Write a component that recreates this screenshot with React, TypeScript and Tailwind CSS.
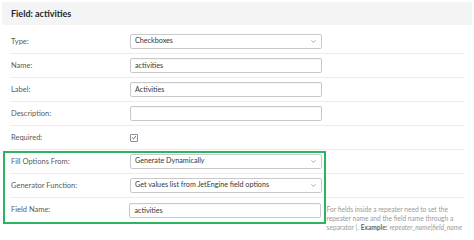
import { ChevronDown } from "lucide-react";

const font = { fontFamily: 'Lato, "Open Sans", sans-serif' };

const Row = ({
  label,
  children,
}: {
  label: string;
  children?: React.ReactNode;
}) => (
  <div className="flex h-[24px] items-center border-b border-[#ececec] ml-[10px] mr-[10px]">
    <div className="w-[120px] pl-[1px] text-[7.5px] text-[#5a5a5a]">{label}</div>
    <div className="w-[192px] flex items-center">{children}</div>
  </div>
);

const Input = ({ value }: { value: string }) => (
  <div className="h-[15px] w-full rounded-[2px] border border-[#c9c9c9] bg-white px-[4px] text-[7.2px] leading-[13px] text-[#32373c] shadow-[inset_0_1px_1px_rgba(0,0,0,0.04)]">
    {value}
  </div>
);

const Select = ({ value }: { value: string }) => (
  <div className="flex h-[15px] w-full items-center justify-between rounded-[2px] border border-[#c9c9c9] bg-white pl-[4px] pr-[4px] text-[7.2px] text-[#32373c]">
    <span>{value}</span>
    <ChevronDown size={7} strokeWidth={2} className="text-[#666]" />
  </div>
);

export default function App() {
  return (
    <div className="relative h-[239px] w-[474px] bg-white pt-[2px]" style={font}>
      <div className="ml-[2px] mr-[2px] flex h-[23px] items-center bg-[#f4f4f4] pl-[9px] text-[9px] font-bold text-[#23282d]">
        Field: activities
      </div>
      <div className="pt-[5px]">
        <Row label="Type:">
          <Select value="Checkboxes" />
        </Row>
        <Row label="Name:">
          <Input value="activities" />
        </Row>
        <Row label="Label:">
          <Input value="Activities" />
        </Row>
        <Row label="Description:">
          <Input value="" />
        </Row>
        <Row label="Required:">
          <div className="flex h-[8px] w-[8px] items-center justify-center rounded-[1px] border border-[#8c8f94] bg-white">
            <svg viewBox="0 0 10 10" className="h-[7px] w-[7px]">
              <path d="M2 5.2 L4.2 7.3 L8.2 2.6" fill="none" stroke="#2271b1" strokeWidth="1.6" />
            </svg>
          </div>
        </Row>
        <Row label="Fill Options From:">
          <Select value="Generate Dynamically" />
        </Row>
        <Row label="Generator Function:">
          <Select value="Get values list from JetEngine field options" />
        </Row>
        <div className="ml-[10px] mr-[10px] flex h-[24px] items-center">
          <div className="w-[120px] pl-[1px] text-[7.5px] text-[#5a5a5a]">Field Name:</div>
          <div className="w-[192px]">
            <Input value="activities" />
          </div>
          <div className="ml-[6px] mt-[17px] w-[138px] text-[6.6px] leading-[9px] text-[#9a9a9a]">
            <p>For fields inside a repeater need to set the repeater name and the field name through a</p>
            <p className="flex gap-[2px] whitespace-nowrap">
              <span>separator |.</span>
              <b className="font-bold text-[#666]">Example:</b>
              <i>repeater_name|field_name</i>
            </p>
          </div>
        </div>
      </div>
      <div className="pointer-events-none absolute left-[3px] top-[151px] h-[73px] w-[323px] border-2 border-[#2bb563]" />
    </div>
  );
}
